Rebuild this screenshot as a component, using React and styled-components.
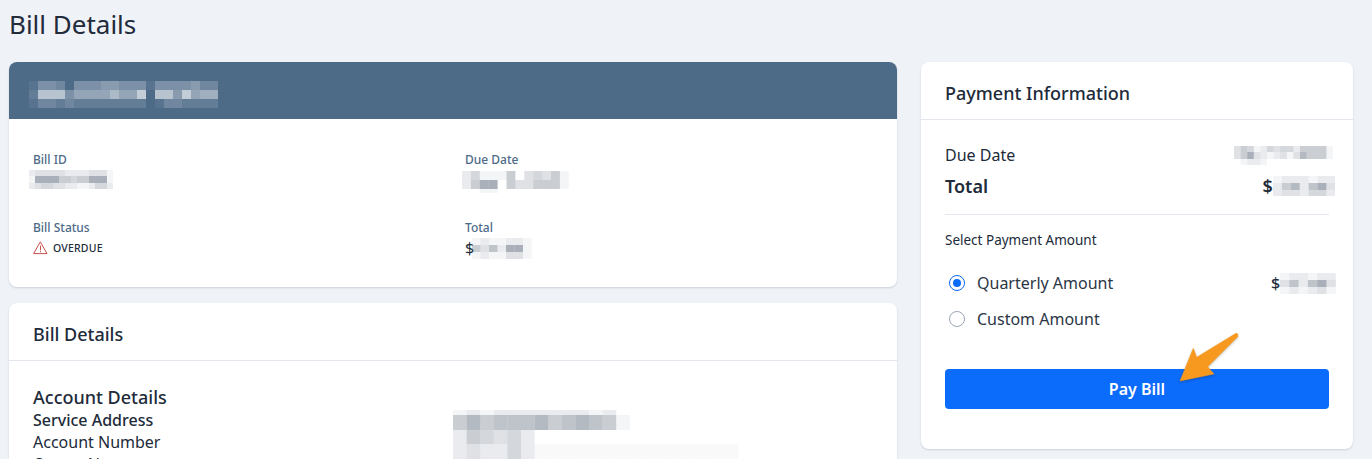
import React from "react";
import styled, { createGlobalStyle } from "styled-components";

const Global = createGlobalStyle`
  html, body { margin: 0; padding: 0; height: 459px; overflow: hidden; background: #eff2f7; }
  body { font-family: "Noto Sans", "Open Sans", sans-serif; color: #212b3a; }
  * { box-sizing: border-box; }
`;

const Page = styled.div`
  height: 459px;
  overflow: hidden;
  padding: 8px 19px 0 9px;
`;
const Title = styled.h1`
  margin: 0 0 20px;
  height: 34px;
  font-size: 26px;
  line-height: 32px;
  font-weight: 400;
  color: #212b3a;
`;
const Columns = styled.div`
  display: grid;
  grid-template-columns: 888px 432px;
  column-gap: 24px;
  align-items: start;
`;
const Stack = styled.div`
  display: flex;
  flex-direction: column;
  gap: 16px;
`;
const Card = styled.section`
  position: relative;
  background: #fff;
  border-radius: 8px;
  box-shadow: 0 1px 2px rgba(40, 60, 90, 0.18);
  overflow: ${(p) => (p.$clip ? "hidden" : "visible")};
  height: ${(p) => p.$height}px;
`;
const Banner = styled.div`
  height: 57px;
  background: #4d6a87;
  padding-top: 19px;
  padding-left: 20px;
`;
const InfoGrid = styled.div`
  display: grid;
  grid-template-columns: 408px 408px;
  column-gap: 24px;
  row-gap: 17px;
  padding: 33px 24px 0;
`;
const Field = styled.div`
  height: 51px;
`;
const Label = styled.div`
  font-size: 12px;
  line-height: 16px;
  font-weight: 500;
  color: #4d6a87;
`;
const ValueRow = styled.div`
  display: flex;
  align-items: center;
  height: 24px;
  font-size: 16px;
`;
const StatusText = styled.span`
  font-size: 10.5px;
  font-weight: 500;
  letter-spacing: 0.2px;
  color: #212b3a;
  margin-left: 5px;
`;
const CardHead = styled.header`
  height: 58px;
  padding: 5px 24px 0;
  display: flex;
  align-items: center;
  border-bottom: 1px solid #e3e7ed;
  font-size: 18px;
  font-weight: 550;
  color: #212b3a;
`;
const DetailBody = styled.div`
  position: relative;
  padding: 24px 24px 0;
  display: grid;
  grid-template-columns: 420px 1fr;
`;
const DetailLabels = styled.div`
  display: flex;
  flex-direction: column;
`;
const SectionTitle = styled.div`
  font-size: 18px;
  line-height: 24px;
  font-weight: 500;
`;
const DetailLine = styled.div`
  font-size: 16px;
  line-height: 22px;
  font-weight: ${(p) => (p.$strong ? 500 : 400)};
`;
const PayBody = styled.div`
  padding: 22px 24px 0;
`;
const SummaryRow = styled.div`
  display: flex;
  justify-content: space-between;
  align-items: center;
  height: ${(p) => p.$h}px;
  font-size: ${(p) => p.$size}px;
  font-weight: ${(p) => p.$weight};
  color: #212b3a;
`;
const Divider = styled.hr`
  border: 0;
  border-top: 1px solid #e3e7ed;
  margin: 10px 0 16px;
`;
const SelectLabel = styled.div`
  font-size: 13.5px;
  line-height: 18px;
  margin-bottom: 16px;
`;
const RadioRow = styled.label`
  display: flex;
  align-items: center;
  height: 36px;
  font-size: 16px;
  color: #2b3645;
`;
const RadioMark = styled.span`
  flex: none;
  width: 16px;
  height: 16px;
  margin: 0 12px 0 4px;
  border-radius: 50%;
  border: 1px solid ${(p) => (p.$on ? "#0b6bfb" : "#9aa5b3")};
  display: flex;
  align-items: center;
  justify-content: center;
  &::after {
    content: "";
    width: 8px;
    height: 8px;
    border-radius: 50%;
    background: ${(p) => (p.$on ? "#0b6bfb" : "transparent")};
  }
`;
const RadioText = styled.span`
  flex: 1;
`;
const Amount = styled.span`
  display: inline-flex;
  align-items: center;
  color: #212b3a;
  margin-right: ${(p) => p.$bleed || 0}px;
  font-weight: ${(p) => p.$weight || 400};
`;
const PayButton = styled.button`
  display: block;
  width: 100%;
  height: 40px;
  margin-top: 32px;
  border: 0;
  border-radius: 4px;
  background: #0b6bfb;
  color: #fff;
  font: 600 16px "Noto Sans", sans-serif;
`;
const MosaicSvg = styled.svg`
  display: block;
  flex: none;
  margin-left: ${(p) => p.$shift || 0}px;
  margin-right: ${(p) => p.$bleed || 0}px;
  margin-top: ${(p) => p.$lift || 0}px;
`;
const ArrowSvg = styled.svg`
  position: absolute;
  left: 250px;
  top: 265px;
  overflow: visible;
`;

const cellOpacity = (ch) => (ch === "." ? 0.04 : parseInt(ch, 16) / 15);

function Mosaic({ rows, cw, heights, ink, shift, lift, bleed }) {
  const width = rows[0].length * cw;
  const height = heights.reduce((a, b) => a + b, 0);
  let y = 0;
  return (
    <MosaicSvg width={width} height={height} $shift={shift} $lift={lift} $bleed={bleed} aria-hidden="true">
      {rows.map((row, r) => {
        const top = y;
        y += heights[r];
        return [...row].map((ch, c) => (
          <rect
            key={`${r}-${c}`}
            x={c * cw}
            y={top}
            width={cw}
            height={heights[r]}
            fill={ink}
            opacity={cellOpacity(ch)}
          />
        ));
      })}
    </MosaicSvg>
  );
}

const GREY = "#5f6b7c";

const Warning = () => (
  <svg width="15" height="14" viewBox="0 0 15 14" fill="none" stroke="#c8504a" strokeWidth="1" strokeLinejoin="round" strokeLinecap="round">
    <path d="M7.5 1.2 L14 12.6 H1 Z" />
    <path d="M7.5 5 V9" />
    <path d="M7.5 10.6 V10.9" />
  </svg>
);

export default function App() {
  return (
    <>
      <Global />
      <Page>
        <Title>Bill Details</Title>
        <Columns>
          <Stack>
            <Card $height={225} $clip>
              <Banner>
                <Mosaic
                  ink="#ffffff"
                  cw={9}
                  heights={[9, 9, 9]}
                  rows={[
                    "144304445544414444533",
                    "299946666866a0995a677",
                    "133232222222201332222",
                  ]}
                />
              </Banner>
              <InfoGrid>
                <Field>
                  <Label>Bill ID</Label>
                  <Mosaic
                    ink={GREY}
                    cw={6}
                    heights={[6, 7, 6]}
                    shift={-4}
                    lift={2}
                    rows={["23333322223331", "18888554558881", "23443322112442"]}
                  />
                </Field>
                <Field>
                  <Label>Due Date</Label>
                  <Mosaic
                    ink={GREY}
                    cw={8.9}
                    heights={[9, 9, 4]}
                    shift={-3}
                    lift={3}
                    rows={["241115034351", "258805335551", "001100000000"]}
                  />
                </Field>
                <Field>
                  <Label>Bill Status</Label>
                  <ValueRow>
                    <Warning />
                    <StatusText>OVERDUE</StatusText>
                  </ValueRow>
                </Field>
                <Field>
                  <Label>Total</Label>
                  <ValueRow>
                    <Amount>$</Amount>
                    <Mosaic ink={GREY} cw={8.5} heights={[7, 7, 7]} shift={-2} rows={["1211221", "5362881", "1211331"]} />
                  </ValueRow>
                </Field>
              </InfoGrid>
            </Card>
            <Card $height={200}>
              <CardHead>Bill Details</CardHead>
              <DetailBody>
                <DetailLabels>
                  <SectionTitle>Account Details</SectionTitle>
                  <DetailLine $strong>Service Address</DetailLine>
                  <DetailLine>Account Number</DetailLine>
                  <DetailLine>Owner Name</DetailLine>
                </DetailLabels>
                <Mosaic
                  ink={GREY}
                  cw={13.6}
                  heights={[5, 15, 14, 16]}
                  lift={25}
                  rows={[
                    "121222222212000000000",
                    "575666756765100000000",
                    "254342000000000000000",
                    "232242...............",
                  ]}
                />
              </DetailBody>
            </Card>
          </Stack>
          <Card $height={387}>
            <CardHead>Payment Information</CardHead>
            <PayBody>
              <SummaryRow $h={26} $size={16} $weight={400}>
                Due Date
                <Mosaic ink={GREY} cw={6.6} heights={[6, 7, 6]} bleed={-4} rows={["354124344255551", "358321231375551", "012210000000000"]} />
              </SummaryRow>
              <SummaryRow $h={36} $size={18} $weight={600}>
                Total
                <Amount $weight={600} $bleed={-6}>
                  $
                  <Mosaic ink={GREY} cw={8.9} heights={[7, 7, 6]} rows={["1222122", "2572683", "2332442"]} />
                </Amount>
              </SummaryRow>
              <Divider />
              <SelectLabel>Select Payment Amount</SelectLabel>
              <RadioRow>
                <RadioMark $on />
                <RadioText>Quarterly Amount</RadioText>
                <Amount $weight={500} $bleed={-7}>
                  $
                  <Mosaic ink={GREY} cw={9.3} heights={[7, 7, 7]} rows={["122122", "362683", "121231"]} />
                </Amount>
              </RadioRow>
              <RadioRow>
                <RadioMark />
                <RadioText>Custom Amount</RadioText>
              </RadioRow>
              <PayButton type="button">Pay Bill</PayButton>
            </PayBody>
            <ArrowSvg width="70" height="60" viewBox="0 0 70 60" aria-hidden="true">
              <path
                d="M9 54 L22.3 21.3 L25.7 30.3 L65 6.3 Q67.5 6 66.7 9.7 L36.7 39.7 L43 47 Z"
                fill="#f7981f"
                stroke="#f7981f"
                strokeWidth="0.5"
                strokeLinejoin="round"
                style={{ filter: "drop-shadow(0 1px 1px rgba(0,0,0,.25))" }}
              />
            </ArrowSvg>
          </Card>
        </Columns>
      </Page>
    </>
  );
}
